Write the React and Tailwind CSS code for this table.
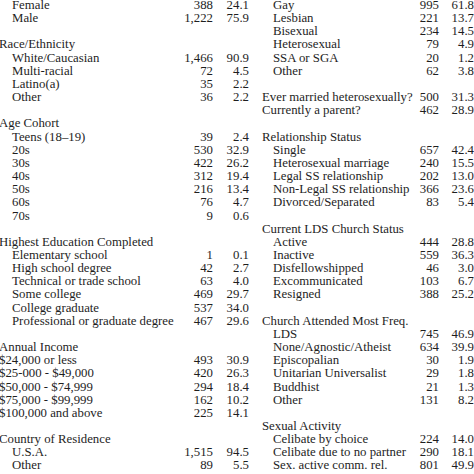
const H = "h";
const B = "b";
const I = "i";

const left = [
  [I, "Female", "388", "24.1"],
  [I, "Male", "1,222", "75.9"],
  [B],
  [H, "Race/Ethnicity"],
  [I, "White/Caucasian", "1,466", "90.9"],
  [I, "Multi-racial", "72", "4.5"],
  [I, "Latino(a)", "35", "2.2"],
  [I, "Other", "36", "2.2"],
  [B],
  [H, "Age Cohort"],
  [I, "Teens (18–19)", "39", "2.4"],
  [I, "20s", "530", "32.9"],
  [I, "30s", "422", "26.2"],
  [I, "40s", "312", "19.4"],
  [I, "50s", "216", "13.4"],
  [I, "60s", "76", "4.7"],
  [I, "70s", "9", "0.6"],
  [B],
  [H, "Highest Education Completed"],
  [I, "Elementary school", "1", "0.1"],
  [I, "High school degree", "42", "2.7"],
  [I, "Technical or trade school", "63", "4.0"],
  [I, "Some college", "469", "29.7"],
  [I, "College graduate", "537", "34.0"],
  [I, "Professional or graduate degree", "467", "29.6"],
  [B],
  [H, "Annual Income"],
  [H, "$24,000 or less", "493", "30.9"],
  [H, "$25-000 - $49,000", "420", "26.3"],
  [H, "$50,000 - $74,999", "294", "18.4"],
  [H, "$75,000 - $99,999", "162", "10.2"],
  [H, "$100,000 and above", "225", "14.1"],
  [B],
  [H, "Country of Residence"],
  [I, "U.S.A.", "1,515", "94.5"],
  [I, "Other", "89", "5.5"],
];

const right = [
  [I, "Gay", "995", "61.8"],
  [I, "Lesbian", "221", "13.7"],
  [I, "Bisexual", "234", "14.5"],
  [I, "Heterosexual", "79", "4.9"],
  [I, "SSA or SGA", "20", "1.2"],
  [I, "Other", "62", "3.8"],
  [B],
  [H, "Ever married heterosexually?", "500", "31.3"],
  [H, "Currently a parent?", "462", "28.9"],
  [B],
  [H, "Relationship Status"],
  [I, "Single", "657", "42.4"],
  [I, "Heterosexual marriage", "240", "15.5"],
  [I, "Legal SS relationship", "202", "13.0"],
  [I, "Non-Legal SS relationship", "366", "23.6"],
  [I, "Divorced/Separated", "83", "5.4"],
  [B],
  [H, "Current LDS Church Status"],
  [I, "Active", "444", "28.8"],
  [I, "Inactive", "559", "36.3"],
  [I, "Disfellowshipped", "46", "3.0"],
  [I, "Excommunicated", "103", "6.7"],
  [I, "Resigned", "388", "25.2"],
  [B],
  [H, "Church Attended Most Freq."],
  [I, "LDS", "745", "46.9"],
  [I, "None/Agnostic/Atheist", "634", "39.9"],
  [I, "Episcopalian", "30", "1.9"],
  [I, "Unitarian Universalist", "29", "1.8"],
  [I, "Buddhist", "21", "1.3"],
  [I, "Other", "131", "8.2"],
  [B],
  [H, "Sexual Activity"],
  [I, "Celibate by choice", "224", "14.0"],
  [I, "Celibate due to no partner", "290", "18.1"],
  [I, "Sex. active comm. rel.", "801", "49.9"],
];

function Column({ rows, side }) {
  const isLeft = side === "left";
  return (
    <div
      className={
        isLeft
          ? "flex w-[263px] shrink-0 flex-col ml-[-1px]"
          : "flex w-[215px] shrink-0 flex-col"
      }
    >
      {rows.map((r, i) => {
        if (r[0] === B) return <div key={i} className="h-[13.17px]" />;
        const indent =
          r[0] === I ? (isLeft ? "pl-[13px]" : "pl-[11px]") : "pl-0";
        return (
          <div
            key={i}
            className={
              isLeft
                ? "grid h-[13.17px] grid-cols-[181px_33px_36px] leading-[13.17px] whitespace-nowrap"
                : "grid h-[13.17px] grid-cols-[143px_34px_35px] leading-[13.17px] whitespace-nowrap"
            }
          >
            <span className={indent}>{r[1]}</span>
            <span className="text-right">{r[2] || ""}</span>
            <span className="text-right">{r[3] || ""}</span>
          </div>
        );
      })}
    </div>
  );
}

export default function App() {
  return (
    <div className="h-[474px] w-[474px] overflow-hidden bg-white font-['Liberation_Serif',serif] text-[12.8px] text-[#1e1e1e]">
      <div className="mt-[-1px] flex">
        <Column rows={left} side="left" />
        <Column rows={right} side="right" />
      </div>
    </div>
  );
}
